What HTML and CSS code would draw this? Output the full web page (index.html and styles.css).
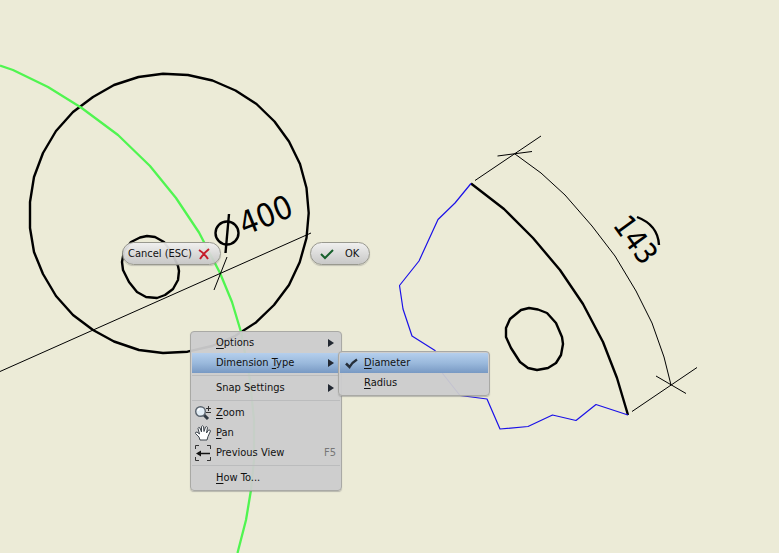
FILE: index.html
```html
<!DOCTYPE html>
<html lang="en">
<head>
<meta charset="utf-8">
<title>Sketch</title>
<link rel="stylesheet" href="styles.css">
</head>
<body>
<main class="canvas">
  <svg class="drawing" width="779" height="553" viewBox="0 0 779 553" role="img" aria-label="Detail drawing with dimensions">
    <polygon class="edge" points="163,73.8 188,75 212.5,80.5 235.5,90.5 256.5,104 274.5,121.5 289,141.5 300,164 306.5,188 308.7,213 306.5,238 299.7,262.3 289,285 274,305 256,322.4 235,336 212,346 187.5,351.7 163,353 139,350 114,341.5 93,330 73,315 56,296 43,274 34,252 30,228 30,202 34,177 43,153 56,131 73,112 93,97 114,85 138.5,77"/>
    <polygon class="edge" points="140,237.5 147,236 155,237 164,242 172,253 178,266 179,271 178,280 173,289 165,295 157,298 146,297 137,292 129,282 123,270 122,262 124,251 131,242"/>
    <polygon class="edge" points="521,310 529,308 538,309.5 547,313 556,323 562,337 563,344 561,355 556,363 548,368 537,370 528,368 520,362 511,348 506,337 506,328 510,319"/>
    <polyline class="selected" points="0,65.5 13,70 48,87 81,107.5 118,135 150,166 176,198 199,232.5 220,273 232,302 241,332 250,380 254,420 254,460 251,490 246,520 237.5,553"/>
    <path class="thin" d="M0 371.5 311 233M227 257 214 290"/>
    <text class="dimension dimension-diameter" transform="translate(224 244) rotate(-22)" x="22" y="0">400</text>
    <circle class="edge" cx="227" cy="233" r="11.5"/>
    <path class="edge" d="M229 214 225.500 253"/>
    <polyline class="edge" points="471,183.500 504,209 533,238 560,270 583,304 603,342 617,378 628,415"/>
    <polyline class="break" points="471,183.500 455,203 438,219.500 419,261 399.500,285.500 403,309 412,336 435,350.500 443,374 460,395.500 487,399 500,429 528,426.500 552.500,415 576,420.500 596,404.500 628,415"/>
    <path class="thin" d="M475 180.500 541 136M497.500 156 532 151.500M632 411.500 697 367.500M656 376 686 393.500"/>
    <polyline class="thin" points="515,154 541,173 565,195 592,226 615,256 636,291 652,323 664,357 671,385"/>
    <text class="dimension dimension-arc" transform="translate(612 225) rotate(54)">143</text>
    <path class="edge" d="M637 217Q658 225 659 245"/>
  </svg>

  <button class="pill cancel" type="button">Cancel (ESC)
    <svg width="12" height="12" viewBox="0 0 12 12" aria-hidden="true"><path class="cross" d="M1 2Q6 5 10 11M11 1Q6 5 2 11"/></svg>
  </button>
  <button class="pill ok" type="button">
    <svg width="14" height="12" viewBox="0 0 14 12" aria-hidden="true"><path class="tick" d="M1 6 5 10 13 2"/></svg>
    OK
  </button>

  <nav class="menu main-menu" aria-label="Context menu">
    <button class="item" type="button"><span class="label"><u>O</u>ptions</span><span class="arrow"></span></button>
    <button class="item active" type="button"><span class="label">Dimension <u>T</u>ype</span><span class="arrow"></span></button>
    <hr>
    <button class="item" type="button"><span class="label">Snap Settings</span><span class="arrow"></span></button>
    <hr>
    <button class="item" type="button">
      <svg class="icon" width="18" height="18" viewBox="0 0 18 18" aria-hidden="true"><path d="M9.500 10.500 14 15" stroke="#303943" stroke-width="3"/><circle cx="6.500" cy="7.500" r="4.800" fill="#e2edf5" stroke="#59636d" stroke-width="1.400"/><path d="M4 7Q4 5 6 4.500" fill="none" stroke="#fff" stroke-width="1.500"/><path d="M12 4.500h5M14.500 2v5M12 8.500h5" stroke="#333" stroke-width="1"/></svg>
      <span class="label"><u>Z</u>oom</span>
    </button>
    <button class="item" type="button">
      <svg class="icon" width="18" height="18" viewBox="0 0 18 18" aria-hidden="true"><path d="M6 16 5 13 1.500 9.500Q1 8 3 8l2.500 2L4 4.500Q4.500 2.500 6 4l1.500 4V2.500Q8.500 1 9.500 2.500l.5 5 1.500-4.500q1.500-1 2 .5L12.500 9l2-3q1.500-.5 2 1L14 12.500 13 16Z" fill="#fff" stroke="#3c444c" stroke-width="1"/></svg>
      <span class="label"><u>P</u>an</span>
    </button>
    <button class="item" type="button">
      <svg class="icon" width="18" height="18" viewBox="0 0 18 18" aria-hidden="true"><path d="M1.500 5V1.500H5M13 1.500h3.500V5M1.500 13v3.500H5M13 16.500h3.500V13" fill="none" stroke="#333"/><path d="M4 9.500h12" stroke="#111" stroke-width="1.500"/><path d="M2 9.500 7 6.500v6Z" fill="#111"/></svg>
      <span class="label">Previous View</span><kbd>F5</kbd>
    </button>
    <hr>
    <button class="item" type="button"><span class="label"><u>H</u>ow To...</span></button>
  </nav>

  <nav class="menu sub-menu" aria-label="Dimension Type">
    <button class="item active" type="button">
      <svg class="icon" width="18" height="18" viewBox="0 0 18 18" aria-hidden="true"><path d="M4 9.500 7.500 13Q10 8.500 15 5.500" fill="none" stroke="#262f3b" stroke-width="2.500"/></svg>
      <span class="label"><u>D</u>iameter</span>
    </button>
    <button class="item" type="button"><span class="label"><u>R</u>adius</span></button>
  </nav>
</main>
</body>
</html>
```
FILE: styles.css
```css
* { box-sizing: border-box; }

body {
  margin: 0;
  background: #ecebd7;
  color: #111;
  font: 11px/16px "DejaVu Sans Condensed", "DejaVu Sans", sans-serif;
}

.canvas {
  position: relative;
  min-height: 100vh;
  overflow: hidden;
}

.drawing { display: block; }
.edge, .thin, .break, .selected { fill: none; stroke: #000; stroke-linejoin: round; }
.edge { stroke-width: 2.4; }
.thin { stroke-width: 1; }
.break { stroke: #1a10e8; stroke-width: 1.2; }
.selected { stroke: #50f550; stroke-width: 2.3; }
.dimension { font-family: "DejaVu Sans Condensed", "DejaVu Sans", sans-serif; fill: #000; }
.dimension-diameter { font-size: 32px; }
.dimension-arc { font-size: 30px; }

button {
  font: inherit;
  color: inherit;
}

.pill {
  position: absolute;
  display: flex;
  align-items: center;
  height: 23px;
  padding: 0 10px 0 5px;
  border: 1px solid #99998f;
  border-radius: 12px;
  background: linear-gradient(rgba(240, 240, 240, .94), rgba(218, 218, 218, .94) 50%, rgba(198, 198, 198, .94));
  box-shadow: 0 1px 1px #8886;
  white-space: nowrap;
}
.cancel { left: 122px; top: 242px; gap: 6px; }
.ok { left: 310px; top: 242px; gap: 11px; padding-left: 9px; }
.cross, .tick { fill: none; stroke-width: 2; }
.cross { stroke: #c51d2b; }
.tick { stroke: #17602c; }

.menu {
  position: absolute;
  width: 152px;
  padding: 1px 1px 2px;
  border: 1px solid #a9a9a5;
  border-radius: 4px;
  background: rgba(204, 204, 205, .95);
  box-shadow: 0 1px 1px #8888;
}
.main-menu { left: 190px; top: 331px; }
.sub-menu { left: 338px; top: 351px; }

.item {
  position: relative;
  display: flex;
  align-items: center;
  width: 100%;
  height: 20px;
  padding: 0 4px 0 24px;
  border: 0;
  background: none;
  text-align: left;
  white-space: nowrap;
}
.active { background: linear-gradient(#b5cfed, #9ab9dc 50%, #7899c3); }
.label { flex: 1; }
.icon { position: absolute; left: 2px; top: 1px; }
.arrow {
  border: solid transparent;
  border-width: 4px 0 4px 6px;
  border-left-color: #222832;
  margin-right: 2px;
}
kbd { font: inherit; color: #777; }
u { text-underline-offset: 2px; }

hr {
  height: 1px;
  margin: 2px 0;
  border: 0;
  background: #bbbcbd;
}
```
